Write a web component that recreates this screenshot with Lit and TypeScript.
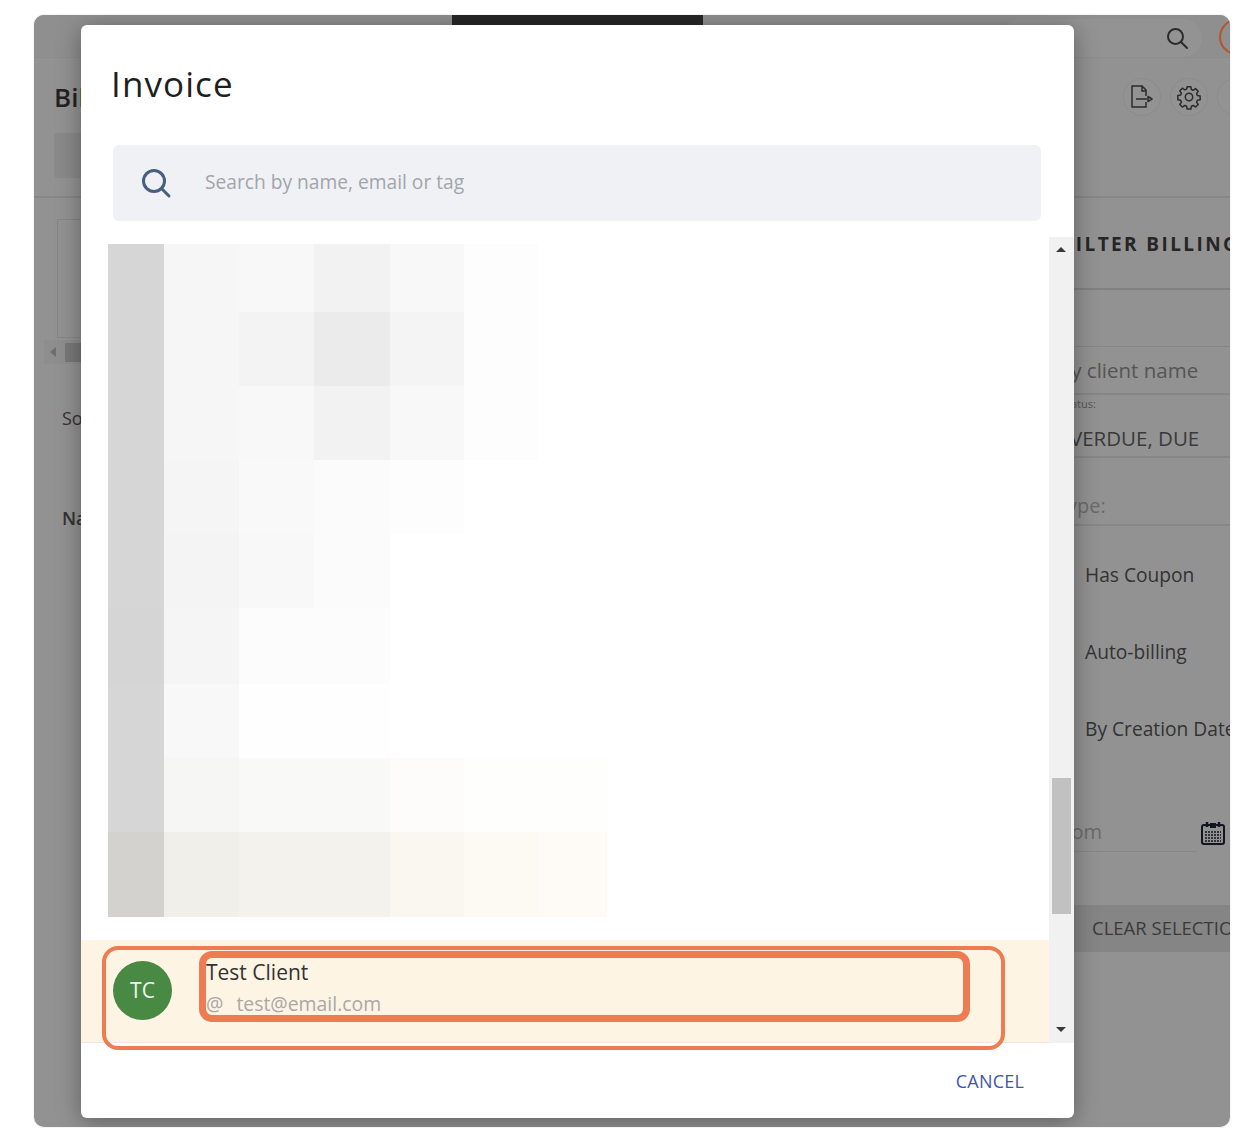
import { LitElement, html, css } from "lit";
import { customElement } from "lit/decorators.js";

const COLS = [56, 75, 75, 76, 74, 74, 69];
const ROWS = [68, 74, 74, 74, 74, 76, 74, 74, 85];
const M = [
  ["d6d6d6","f6f6f6","f8f8f8","f2f2f2","f8f8f8","fdfdfd","ffffff"],
  ["d6d6d6","f6f6f6","f3f3f3","ebebeb","f4f4f4","fdfdfd","ffffff"],
  ["d6d6d6","f6f6f6","f8f8f8","f2f2f2","f8f8f8","fdfdfd","ffffff"],
  ["d6d6d6","f5f5f5","f9f9f9","fbfbfb","fdfdfd","ffffff","ffffff"],
  ["d6d6d6","f4f4f4","f8f8f8","fbfbfb","ffffff","ffffff","ffffff"],
  ["d5d5d6","f5f5f5","fcfcfc","fcfcfc","ffffff","ffffff","ffffff"],
  ["d6d6d6","f8f8f8","fefefe","fefefe","ffffff","ffffff","ffffff"],
  ["d6d6d6","f6f6f5","f9f9f8","f9f9f8","fdfcfb","fefefd","fefefd"],
  ["d3d2cf","f0efea","f3f2ed","f3f2ed","faf7f1","fdfaf4","fefaf5"],
];

@customElement("app-root")
export class AppRoot extends LitElement {
  static styles = css`
    :host { display: block; width: 1254px; height: 1136px; background: #fff; font-family: "Open Sans", "Noto Sans", sans-serif; overflow: hidden; }
    .page { padding: 15px 24px 9px 34px; height: 1136px; box-sizing: border-box; }
    .win { position: relative; height: 1112px; border-radius: 10px; overflow: hidden; background: #929292; display: flex; flex-direction: column; color: #2e2e2e; box-shadow: 0 0 0 1px #f4f3f7; }
    .notch { position: absolute; left: 418px; top: 0; width: 251px; height: 10px; background: #262626; }
    .topbar { height: 42px; flex: none; background: #8f8f8f; border-bottom: 1px solid #8c8c8c; display: flex; justify-content: flex-end; align-items: flex-start; }
    .searchpill { width: 200px; height: 38px; margin-top: 4px; border-radius: 19px; background: #939393; display: flex; align-items: center; justify-content: flex-end; padding-right: 12px; box-sizing: border-box; margin-right: 17px; }
    .avatar { width: 36px; height: 36px; border: 2px solid #b5552e; border-radius: 50%; margin: 4px -25px 0 0; flex: none; box-sizing: border-box; }
    .head { height: 140px; flex: none; border-bottom: 2px solid #868686; box-sizing: border-box; position: relative; display: flex; justify-content: flex-end; padding: 20px 0 0 21px; }
    .title { position: absolute; left: 20px; top: 24px; font-size: 26px; font-weight: 600; color: #222; line-height: 30px; }
    .tab { position: absolute; left: 20px; top: 75px; width: 40px; height: 45px; background: #8a8a8a; border-radius: 4px; }
    .actions { display: flex; gap: 9px; margin-right: -25px; }
    .circle { width: 38px; height: 38px; border-radius: 50%; border: 1px solid #8c8c8c; background: #939393; box-sizing: border-box; display: flex; align-items: center; justify-content: center; flex: none; }
    .body { flex: 1; display: flex; min-height: 0; }
    .left { flex: 1; padding: 21px 0 0 23px; font-size: 18px; color: #333; }
    .tablebox { width: 60px; height: 119px; border: 1px solid #868686; box-sizing: border-box; }
    .hscroll { width: 60px; height: 24px; margin-left: -13px; padding-left: 13px; display: flex; align-items: center; background: #8e8e8e; gap: 9px; margin-top: 2px; }
    .hscroll i { width: 0; height: 0; border: 5px solid transparent; border-right: 6px solid #6f6f6f; border-left: 0; margin-left: -7px; }
    .hscroll b { flex: 1; height: 19px; background: #787878; }
    .left p { margin: 42px 0 0 5px; line-height: 24px; }
    .left p + p { margin-top: 76px; font-weight: 600; }
    .filter { width: 200px; flex: none; overflow: hidden; padding-top: 34px; font-size: 20px; white-space: nowrap; }
    .ftitle { height: 58px; box-sizing: border-box; padding-left: 33px; font-size: 19px; font-weight: 700; letter-spacing: 2.4px; color: #252525; border-bottom: 2px solid #818181; line-height: 24px; }
    .field { border-bottom: 2px solid #868686; box-sizing: border-box; color: #4a4a4a; }
    .f1 { margin-top: 56px; height: 49px; line-height: 46px; border-top: 1px solid #868686; color: #555; font-size: 20.500px; padding-left: 28px; }
    .f2 { height: 63px; position: relative; padding-left: 24px; font-size: 20.500px; line-height: 26px; padding-top: 30px; color: #3a3a3a; }
    .f2 small { position: absolute; left: 31px; top: 2px; font-size: 11px; line-height: 14px; color: #555; }
    .f3 { height: 68px; padding: 36px 0 0 26px; line-height: 24px; color: #6a6a6a; }
    .chk { margin: 37px 0 0 55px; font-size: 19.200px; line-height: 24px; color: #333; height: 24px; }
    .chk + .chk { margin-top: 53px; }
    .from { display: flex; align-items: flex-end; margin-top: 76px; padding-left: 23px; }
    .from span { width: 144px; border-bottom: 1px solid #878787; box-sizing: border-box; height: 35px; color: #6a6a6a; font-size: 20px; line-height: 30px; flex: none; }
    .from svg { margin: 0 0 6px 3px; flex: none; }
    .clear { margin-top: 53px; background: #858585; height: 47px; line-height: 46px; font-size: 18.500px; padding-left: 62px; color: #3a3a3a; }

    .modal { position: absolute; left: 47px; top: 10px; width: 993px; height: 1093px; background: #fff; border-radius: 6px; box-shadow: 0 4px 24px rgba(0,0,0,.35); display: flex; flex-direction: column; overflow: hidden; }
    h2 { margin: 0; padding: 39px 0 0 30px; height: 120px; box-sizing: border-box; flex: none; font-size: 35px; font-weight: 400; line-height: 40px; color: #1f1f1f; letter-spacing: 1.100px; }
    .search { flex: none; margin-left: 32px; width: 928px; height: 76px; background: #f0f1f5; border-radius: 6px; display: flex; align-items: center; padding-left: 27px; box-sizing: border-box; gap: 33px; font-size: 19.200px; color: #a2a5ab; }
    .search span { margin-top: -3px; }
    .list { flex: none; margin-top: 16px; height: 806px; display: flex; }
    .content { flex: 1; display: flex; flex-direction: column; min-width: 0; }
    .mosaic { margin: 7px 0 0 27px; display: grid; flex: none; }
    .row { margin-top: 23px; height: 103px; background: #fdf4e4; flex: none; border-bottom: 1px solid #e9e7e4; box-sizing: border-box; display: flex; padding: 21px 0 0 32px; }
    .av { width: 59px; height: 59px; border-radius: 50%; background: #488a44; color: #f2f6f0; font-size: 21px; line-height: 59px; text-align: center; flex: none; }
    .txt { margin-left: 34px; }
    .name { font-size: 21px; line-height: 26px; color: #333; margin-top: -2px; }
    .mail { font-size: 19.400px; line-height: 26px; color: #a9a9a7; margin-top: 6px; display: flex; gap: 13px; }
    .sb { width: 25px; flex: none; background: #f1f1f1; position: relative; }
    .sb .up, .sb .dn { position: absolute; left: 7px; width: 0; height: 0; border: 5px solid transparent; border-top: 0; border-bottom: 5px solid #3a3a3a; }
    .sb .up { top: 10px; }
    .sb .dn { bottom: 11px; transform: rotate(180deg); }
    .thumb { position: absolute; left: 3px; top: 541px; width: 19px; height: 136px; background: #c1c1c1; }
    .hl { position: absolute; border: 4px solid #ee7b51; box-sizing: border-box; pointer-events: none; }
    .hl.a { left: 68px; top: 931px; width: 903px; height: 104px; border-radius: 16px; }
    .hl.b { left: 165px; top: 936px; width: 771px; height: 71px; border-width: 7px; border-radius: 13px; }
    .foot { flex: 1; display: flex; justify-content: flex-end; align-items: flex-start; padding: 26px 50px 0 0; }
    .cancel { font-size: 18px; line-height: 24px; color: #4355ab; letter-spacing: .2px; }
  `;

  render() {
    const gridStyle = `grid-template-columns:${COLS.map((c) => c + "px").join(" ")};grid-template-rows:${ROWS.map((r) => r + "px").join(" ")}`;
    return html`<div class="page"><div class="win">
      <div class="notch"></div>
      <div class="topbar">
        <div class="searchpill"><svg width="26" height="26" viewBox="0 0 26 26" fill="none" stroke="#2b2b2b" stroke-width="2"><circle cx="11.5" cy="11.5" r="7.5"/><path d="M17 17l6 6" stroke-linecap="round"/></svg></div>
        <div class="avatar"></div>
      </div>
      <div class="head">
        <div class="title">Billing</div>
        <div class="tab"></div>
        <div class="actions">
          <div class="circle"><svg width="28" height="28" viewBox="0 0 28 28" fill="none" stroke="#2b2b2b" stroke-width="1.5"><path d="M18 13V7l-4-4H4v21h14v-5"/><path d="M14 3v5h4M8 16h11"/><path d="M20 13.5l4 2.5-4 2.500z" stroke-linejoin="round"/></svg></div>
          <div class="circle"><svg width="26" height="26" viewBox="0 0 24 24" fill="none" stroke="#2b2b2b" stroke-width="1.4" stroke-linejoin="round"><circle cx="12" cy="12" r="3.4"/><path d="M10.3 2.5h3.4l.5 2.6 1.7.7 2.2-1.5 2.4 2.4-1.5 2.2.7 1.7 2.6.5v3.4l-2.6.5-.7 1.7 1.5 2.2-2.4 2.4-2.2-1.5-1.7.7-.5 2.6h-3.4l-.5-2.6-1.7-.7-2.2 1.5-2.4-2.4 1.5-2.2-.7-1.7-2.6-.5V10.700l2.600-.500.700-1.700-1.500-2.200 2.400-2.400 2.200 1.500 1.700-.700z"/></svg></div>
          <div class="circle"></div>
        </div>
      </div>
      <div class="body">
        <div class="left">
          <div class="tablebox"></div>
          <div class="hscroll"><i></i><b></b></div>
          <p>So</p>
          <p>Na</p>
        </div>
        <div class="filter">
          <div class="ftitle">FILTER BILLING</div>
          <div class="field f1">By client name</div>
          <div class="field f2"><small>Status:</small>OVERDUE, DUE</div>
          <div class="field f3">Type:</div>
          <div class="chk">Has Coupon</div>
          <div class="chk">Auto-billing</div>
          <div class="chk">By Creation Date</div>
          <div class="from"><span>From</span><svg width="26" height="26" viewBox="0 0 26 26" fill="none" stroke="#15151f" stroke-width="2"><rect x="2" y="5" width="22" height="19" rx="2"/><path d="M7 2v5M19 2v5" stroke-width="2.500"/><rect x="10" y="3" width="6" height="5" fill="#15151f" stroke="none"/><path d="M5 12h16M5 15h16M5 18h16M5 21h16" stroke-width="1.500" stroke-dasharray="2 1"/></svg></div>
          <div class="clear">CLEAR SELECTION</div>
        </div>
      </div>

      <div class="modal">
        <h2>Invoice</h2>
        <div class="search">
          <svg width="32" height="32" viewBox="0 0 32 32" fill="none" stroke="#47607f" stroke-width="3"><circle cx="14" cy="14" r="10.500"/><path d="M22 22l7 7" stroke-linecap="round"/></svg>
          <span>Search by name, email or tag</span>
        </div>
        <div class="list">
          <div class="content">
            <div class="mosaic" style=${gridStyle}>
              ${M.flat().map((c) => html`<div style="background:#${c}"></div>`)}
            </div>
            <div class="row">
              <div class="av">TC</div>
              <div class="txt">
                <div class="name">Test Client</div>
                <div class="mail"><span>@</span><span>test@email.com</span></div>
              </div>
            </div>
          </div>
          <div class="sb"><div class="up"></div><div class="thumb"></div><div class="dn"></div></div>
        </div>
        <div class="foot"><div class="cancel">CANCEL</div></div>
      </div>
      <div class="hl a"></div>
      <div class="hl b"></div>
    </div></div>`;
  }
}
